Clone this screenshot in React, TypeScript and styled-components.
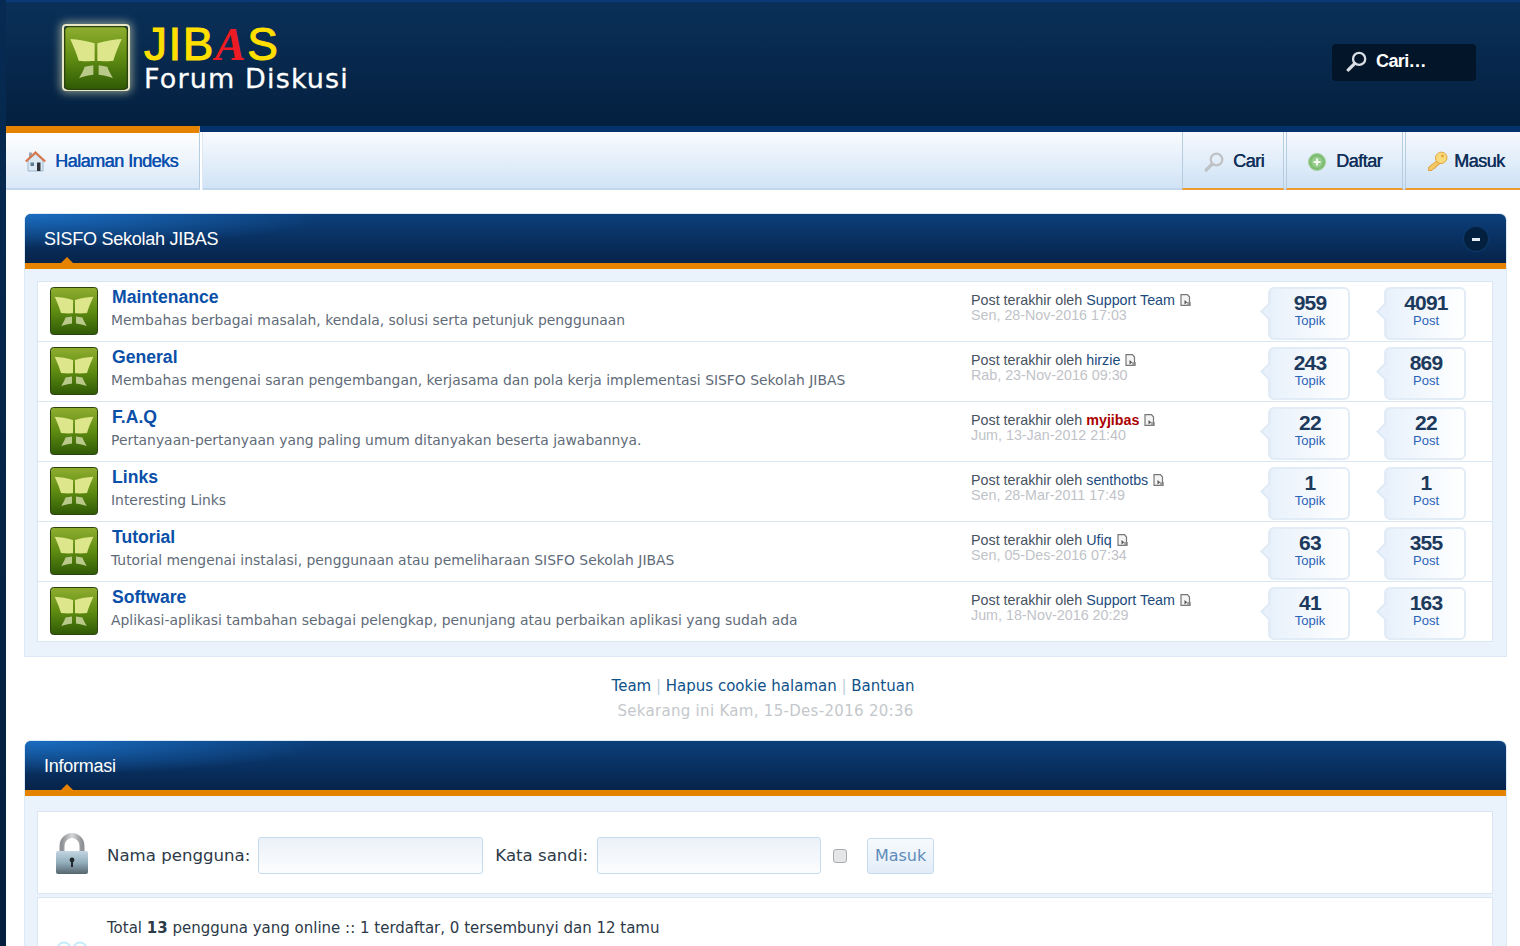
import React from "react";
import styled, { createGlobalStyle } from "styled-components";

const GlobalStyle = createGlobalStyle`
  html, body {
    margin: 0;
    padding: 0;
    height: 946px;
    overflow: hidden;
    background: #fff;
  }
  body {
    font-family: "DejaVu Sans", sans-serif;
  }
  * { box-sizing: border-box; }
`;

const forums = [
  { title: "Maintenance", desc: "Membahas berbagai masalah, kendala, solusi serta petunjuk penggunaan", by: "Support Team", date: "Sen, 28-Nov-2016 17:03", topics: 959, posts: 4091 },
  { title: "General", desc: "Membahas mengenai saran pengembangan, kerjasama dan pola kerja implementasi SISFO Sekolah JIBAS", by: "hirzie", date: "Rab, 23-Nov-2016 09:30", topics: 243, posts: 869 },
  { title: "F.A.Q", desc: "Pertanyaan-pertanyaan yang paling umum ditanyakan beserta jawabannya.", by: "myjibas", admin: true, date: "Jum, 13-Jan-2012 21:40", topics: 22, posts: 22 },
  { title: "Links", desc: "Interesting Links", by: "senthotbs", date: "Sen, 28-Mar-2011 17:49", topics: 1, posts: 1 },
  { title: "Tutorial", desc: "Tutorial mengenai instalasi, penggunaan atau pemeliharaan SISFO Sekolah JIBAS", by: "Ufiq", date: "Sen, 05-Des-2016 07:34", topics: 63, posts: 355 },
  { title: "Software", desc: "Aplikasi-aplikasi tambahan sebagai pelengkap, penunjang atau perbaikan aplikasi yang sudah ada", by: "Support Team", date: "Jum, 18-Nov-2016 20:29", topics: 41, posts: 163 },
];

function ButterflyIcon({ size, id }: { size: number; id: string }) {
  return (
    <svg width={size} height={size} viewBox="0 0 48 48">
      <defs>
        <linearGradient id={id} x1="0" y1="0" x2="0" y2="1">
          <stop offset="0" stopColor="#8fae30" />
          <stop offset="0.5" stopColor="#5f8c12" />
          <stop offset="1" stopColor="#2f5a05" />
        </linearGradient>
      </defs>
      <rect x="0.5" y="0.5" width="47" height="47" rx="3" fill={`url(#${id})`} stroke="#2c4310" />
      <path d="M4.7 9.7 C11 10 17 11.3 23 13 L23 26.3 C19 26.5 15 26.5 11 26 C9.5 20.5 7 15 4.7 9.7 Z" fill="#dde68a" />
      <path d="M43.3 9.7 C37 10 31 11.3 25 13 L25 26.3 C29 26.5 33 26.5 37 26 C38.5 20.5 41 15 43.3 9.7 Z" fill="#dde68a" />
      <path d="M22 29.5 L22 36.5 C18 37 14.5 37.8 11.3 39 C13 36 14.5 33.5 15.5 30.5 Z" fill="#b9c98a" />
      <path d="M26 29.5 L26 36.5 C30 37 33.5 37.8 36.7 39 C35 36 33.5 33.5 32.5 30.5 Z" fill="#b9c98a" />
    </svg>
  );
}

function SearchIcon({ size, color }: { size: number; color: string }) {
  return (
    <svg width={size} height={size} viewBox="0 0 20 20" fill="none">
      <circle cx="12.5" cy="7.5" r="5.8" stroke={color} strokeWidth="2.2" />
      <path d="M8.2 12 L2.2 18" stroke={color} strokeWidth="3.2" strokeLinecap="round" />
    </svg>
  );
}

function HouseIcon() {
  return (
    <svg width="21" height="21" viewBox="0 0 21 21">
      <rect x="4" y="1.5" width="3" height="5" fill="#9aa7b2" />
      <path d="M3 9.5 L10.5 3 L18 9.5 V20 H3 Z" fill="#dbe8f4" stroke="#8ea9c2" strokeWidth="0.8" />
      <path d="M0.8 10.5 L10.5 1.5 L20.2 10.5" fill="none" stroke="#d9774a" strokeWidth="2.2" />
      <rect x="5.5" y="11.5" width="3.5" height="3.5" fill="#5d7a93" />
      <rect x="12" y="11.5" width="3.5" height="8.5" fill="#2d3338" />
    </svg>
  );
}

function PlusIcon() {
  return (
    <svg width="18" height="18" viewBox="0 0 18 18">
      <circle cx="9" cy="9" r="8.5" fill="#7dbd72" stroke="#a3d09b" />
      <circle cx="9" cy="9" r="5.5" fill="#97cd8c" />
      <path d="M9 5.5 V12.5 M5.5 9 H12.5" stroke="#f2faef" strokeWidth="2.2" />
    </svg>
  );
}

function KeyIcon() {
  return (
    <svg width="21" height="21" viewBox="0 0 21 21">
      <path d="M9 10.5 L1.8 16 L1.5 19.5 L5 19.5 L6.5 17.5 L8.5 17 L9 15 L11 14.5 L13 12.5 Z" fill="#f4c964" stroke="#e09a35" strokeWidth="0.9" />
      <path d="M8.5 7 C8.5 3.5 11.5 1.2 14.5 1.2 C17.5 1.2 20 3.5 20 6.5 C20 10 17 12.5 14 12.5 C11 12.5 8.5 10.5 8.5 7 Z" fill="#f9da7a" stroke="#e09a35" strokeWidth="0.9" />
      <ellipse cx="15.5" cy="5" rx="1.6" ry="1.2" fill="#e3a63f" />
    </svg>
  );
}

function PostIcon() {
  return (
    <svg width="11" height="12" viewBox="0 0 11 12" fill="none">
      <path d="M1 0.7 H7.5 L9.5 3 V11.3 H1 Z" fill="#f4f4f4" stroke="#777" strokeWidth="1.2" />
      <path d="M4.5 6 L7.2 8.3 L4.5 10.6 Z" fill="#555" />
      <path d="M7 8 H11 V12 H7 Z" fill="#888" opacity="0.7" />
    </svg>
  );
}

function LockIcon() {
  return (
    <svg width="34" height="42" viewBox="0 0 34 42">
      <defs>
        <linearGradient id="lockBody" x1="0" y1="0" x2="0" y2="1">
          <stop offset="0" stopColor="#c3d6e2" />
          <stop offset="0.5" stopColor="#93aebd" />
          <stop offset="1" stopColor="#56666f" />
        </linearGradient>
        <linearGradient id="lockArc" x1="0" y1="0" x2="1" y2="0">
          <stop offset="0" stopColor="#8e9296" />
          <stop offset="0.5" stopColor="#d6d8da" />
          <stop offset="1" stopColor="#8e9296" />
        </linearGradient>
      </defs>
      <path d="M7 20 V13 A10 10.5 0 0 1 27 13 V20" fill="none" stroke="url(#lockArc)" strokeWidth="5" />
      <rect x="1" y="18" width="32" height="23" rx="2" fill="url(#lockBody)" />
      <circle cx="17" cy="27" r="2.4" fill="#22282c" />
      <rect x="16" y="27" width="2" height="7" fill="#22282c" />
    </svg>
  );
}

function OnlineIcon() {
  return (
    <svg width="34" height="8" viewBox="0 0 34 8" fill="none">
      <circle cx="9" cy="8" r="6.5" stroke="#c3ecfa" strokeWidth="2" />
      <circle cx="25" cy="8" r="6.5" stroke="#c3ecfa" strokeWidth="2" />
    </svg>
  );
}

const Page = styled.div`
  height: 946px;
  overflow: hidden;
  padding-left: 6px;
  background: linear-gradient(180deg, #062a52 0%, #041f3d 100%);
`;

const Sheet = styled.div`
  background: #fff;
  min-height: 946px;
`;

const Masthead = styled.header`
  height: 132px;
  border-top: 2px solid #0b3a78;
  background: linear-gradient(180deg, #0a3059 0%, #04203f 100%);
  border-bottom: 6px solid #03326c;
  display: flex;
  align-items: flex-start;
  justify-content: space-between;
  padding: 22px 44px 0 56px;
`;

const Brand = styled.div`
  display: flex;
  gap: 14px;
`;

const BrandIcon = styled.div`
  width: 68px;
  height: 67px;
  border-radius: 4px;
  border: 2px solid #e8e8c4;
  box-shadow: 0 0 8px 2px rgba(236, 238, 190, 0.55);
  display: flex;
  svg { display: block; }
`;

const BrandText = styled.div`
  display: flex;
  flex-direction: column;
  margin-top: -1px;
`;

const BrandName = styled.div`
  font-family: "Liberation Sans", Arial, sans-serif;
  font-size: 46px;
  line-height: 42px;
  letter-spacing: 1.5px;
  color: #ffdf00;
  -webkit-text-stroke: 1px #ffdf00;
  em {
    font-family: "Liberation Serif", serif;
    font-style: italic;
    font-weight: 700;
    color: #ed1c24;
    -webkit-text-stroke: 0;
  }
`;

const BrandSub = styled.div`
  font-family: "DejaVu Sans", sans-serif;
  font-size: 27px;
  line-height: 28px;
  margin-top: -1px;
  letter-spacing: 1.15px;
  color: #fff;
  -webkit-text-stroke: 0.3px #fff;
`;

const SearchBox = styled.div`
  width: 144px;
  height: 37px;
  margin-top: 20px;
  padding: 0 0 2px 14px;
  background: #031528;
  border-radius: 4px;
  display: flex;
  align-items: center;
  gap: 9px;
  font-family: "Liberation Sans", Arial, sans-serif;
  font-size: 18px;
  font-weight: 700;
  letter-spacing: -0.6px;
  color: #fff;
`;

const Nav = styled.nav`
  height: 58px;
  display: flex;
  align-items: stretch;
  justify-content: space-between;
`;

const NavFill = styled.div`
  flex: 1;
  display: flex;
  justify-content: flex-end;
  margin-left: 2px;
  height: 58px;
  background: linear-gradient(180deg, #f9fbfe 0%, #cfe2f6 100%);
  box-shadow: inset 0 -2px 0 #c3d7ea;
  border-left: 1px solid #dce8f3;
`;

const NavTab = styled.a<{ $active?: boolean; $width: number; $gap: number }>`
  width: ${(p) => p.$width}px;
  display: flex;
  align-items: center;
  gap: ${(p) => p.$gap}px;
  padding-left: ${(p) => (p.$active ? 19 : 21)}px;
  padding-top: ${(p) => (p.$active ? 1 : 3)}px;
  font-family: "Liberation Sans", Arial, sans-serif;
  font-size: 18px;
  letter-spacing: -0.5px;
  font-weight: 400;
  text-shadow: 0.5px 0 0 currentColor;
  color: ${(p) => (p.$active ? "#0a4fae" : "#10305a")};
  background: ${(p) =>
    p.$active
      ? "linear-gradient(180deg, #ffffff 0%, #d9e8f8 100%)"
      : "linear-gradient(180deg, #f5f9fd 0%, #cfe2f6 100%)"};
  border-left: ${(p) => (p.$active ? "none" : "1px solid #b6cde0")};
  border-right: 1px solid #b6cde0;
  margin-left: ${(p) => (p.$active ? 0 : 2)}px;
  ${(p) =>
    p.$active
      ? `
    margin-top: -6px;
    height: 64px;
    border-top: 7px solid #e58200;
    border-bottom: 2px solid #c3d7ea;
  `
      : `
    height: 58px;
    border-bottom: 2px solid #ed9a2e;
    &:last-child { border-right: none; }
  `}
`;

const Content = styled.main`
  padding: 24px 14px 0 19px;
`;

const Block = styled.section`
  background: #eaf2fb;
  border-radius: 6px 6px 0 0;
  box-shadow: 0 0 0 1px #dce9f6;
  padding-bottom: 14px;
`;

const BlockHead = styled.div`
  position: relative;
  height: 55px;
  border-radius: 6px 6px 0 0;
  border-bottom: 6px solid #e58200;
  background: radial-gradient(ellipse 300px 34px at 0 0, #1a6cc0 0%, rgba(26, 108, 192, 0) 100%),
    linear-gradient(180deg, #0c3f7a 0%, #06234a 100%);
  display: flex;
  align-items: center;
  justify-content: space-between;
  padding: 1px 18px 0 19px;
  font-family: "Liberation Sans", Arial, sans-serif;
  font-size: 18px;
  color: #fff;
  letter-spacing: -0.25px;

  &::after {
    content: "";
    position: absolute;
    left: 36px;
    bottom: 0;
    border-left: 6px solid transparent;
    border-right: 6px solid transparent;
    border-bottom: 6px solid #e58200;
  }
`;

const Collapse = styled.span`
  width: 24px;
  height: 24px;
  border-radius: 50%;
  background: #04203f;
  box-shadow: 0 0 0 1px #0c3a6e;
  display: flex;
  align-items: center;
  justify-content: center;

  &::before {
    content: "";
    width: 8px;
    height: 3px;
    background: #e6edf5;
  }
`;

const RowList = styled.div`
  margin: 12px 13px 0 12px;
  background: #fff;
  border: 1px solid #d9e6f4;
`;

const Row = styled.div`
  height: 60px;
  display: grid;
  grid-template-columns: 921px 297px 116px 1fr;
  padding-left: 12px;
  border-bottom: 1px solid #d9e6f4;
  &:last-child { border-bottom: none; height: 59px; }
`;

const RowMain = styled.div`
  display: flex;
  align-items: flex-start;
  gap: 13px;
  padding-top: 5px;
  svg { display: block; flex: none; }
`;

const RowText = styled.div`
  display: flex;
  flex-direction: column;
`;

const ForumTitle = styled.a`
  margin-left: 1px;
  font-family: "Liberation Sans", Arial, sans-serif;
  font-size: 17.6px;
  line-height: 20px;
  font-weight: 700;
  color: #0a4fa8;
`;

const ForumDesc = styled.div`
  font-size: 13.9px;
  line-height: 18px;
  margin-top: 4px;
  color: #5f6b78;
`;

const LastPost = styled.div`
  padding-top: 11px;
  font-family: "Liberation Sans", Arial, sans-serif;
  font-size: 14.3px;
  line-height: 15px;
  color: #46525f;
`;

const Author = styled.a<{ $admin?: boolean }>`
  color: ${(p) => (p.$admin ? "#aa0000" : "#1c4a7c")};
  font-weight: ${(p) => (p.$admin ? 700 : 400)};
`;

const PostMark = styled.span`
  margin-left: 5px;
  svg { vertical-align: -1px; }
`;

const LastDate = styled.div`
  color: #bfc3c8;
`;

const Stat = styled.div`
  position: relative;
  width: 82px;
  height: 53px;
  margin-top: 5px;
  border: 2px solid #e2ecf7;
  border-left-width: 3px;
  border-radius: 6px;
  background: linear-gradient(90deg, #e8f1fb 0%, #ffffff 100%);
  display: flex;
  flex-direction: column;
  align-items: center;
  padding-left: 1px;
  font-family: "Liberation Sans", Arial, sans-serif;

  &::before {
    content: "";
    position: absolute;
    left: -8px;
    top: 15px;
    width: 13px;
    height: 13px;
    transform: rotate(45deg);
    background: #e8f1fb;
    border-left: 2px solid #dfe9f5;
    border-bottom: 2px solid #dfe9f5;
    clip-path: polygon(0 0, 0 100%, 100% 100%);
  }
`;

const StatCount = styled.b`
  font-size: 21px;
  line-height: 22px;
  margin-top: 3px;
  letter-spacing: -0.8px;
  color: #1d3a5c;
`;

const StatLabel = styled.span`
  font-size: 13px;
  line-height: 14px;
  color: #2a62b8;
`;

const FootLinks = styled.div`
  margin-top: 18px;
  padding-right: 5px;
  text-align: center;
  font-size: 15px;
  line-height: 25px;
  color: #105289;
  span { color: #bcd0e2; }
`;

const FootTime = styled.div`
  text-align: center;
  font-size: 15px;
  line-height: 25px;
  letter-spacing: 0.3px;
  color: #c4c8cc;
  margin-bottom: 17px;
`;

const LoginBox = styled.div`
  margin: 15px 13px 0 12px;
  height: 83px;
  background: #fff;
  border: 1px solid #d9e6f4;
  display: flex;
  align-items: center;
  padding: 6px 0 0 17px;
  font-size: 16.6px;
  color: #2d3a48;
  svg { flex: none; margin-right: 18px; margin-top: -3px; }
`;

const LoginField = styled.input<{ $width: number; $lead: number }>`
  width: ${(p) => p.$width}px;
  height: 37px;
  margin: 0 12px 0 ${(p) => p.$lead}px;
  border: 1px solid #c6daee;
  border-radius: 3px;
  background: linear-gradient(180deg, #ebf1f8 0%, #fcfdfe 100%);
`;

const Remember = styled.span`
  width: 14px;
  height: 14px;
  border: 1px solid #a9a9a9;
  border-radius: 3px;
  background: #e4e6e8;
`;

const LoginButton = styled.button`
  width: 67px;
  height: 36px;
  margin-left: 20px;
  padding: 0;
  border: 1px solid #c6daee;
  border-radius: 3px;
  background: linear-gradient(180deg, #f7fafd 0%, #e2edf8 100%);
  font-family: "DejaVu Sans", sans-serif;
  font-size: 16px;
  color: #5f8cba;
`;

const OnlineBox = styled.div`
  margin: 3px 13px 0 12px;
  height: 120px;
  background: #fff;
  border: 1px solid #d9e6f4;
  display: flex;
  gap: 18px;
  padding: 19px 0 0 17px;
  font-size: 15px;
  line-height: 22px;
  color: #2d3a48;
`;

const OnlineMark = styled.div`
  padding-top: 24px;
  svg { display: block; }
`;

export default function App() {
  return (
    <>
      <GlobalStyle />
      <Page>
        <Sheet>
          <Masthead>
            <Brand>
              <BrandIcon>
                <ButterflyIcon size={64} id="brandIcon" />
              </BrandIcon>
              <BrandText>
                <BrandName>JIB<em>A</em>S</BrandName>
                <BrandSub>Forum Diskusi</BrandSub>
              </BrandText>
            </Brand>
            <SearchBox>
              <SearchIcon size={21} color="#d8dee4" />
              Cari…
            </SearchBox>
          </Masthead>
          <Nav>
            <NavTab $active $width={194} $gap={9}>
              <HouseIcon />
              Halaman Indeks
            </NavTab>
            <NavFill>
              <NavTab $width={102} $gap={9}>
                <SearchIcon size={20} color="#bfc2c4" />
                Cari
              </NavTab>
              <NavTab $width={117} $gap={10}>
                <PlusIcon />
                Daftar
              </NavTab>
              <NavTab $width={115} $gap={6}>
                <KeyIcon />
                Masuk
              </NavTab>
            </NavFill>
          </Nav>
          <Content>
            <Block>
              <BlockHead>
                SISFO Sekolah JIBAS
                <Collapse />
              </BlockHead>
              <RowList>
                {forums.map((f, i) => (
                  <Row key={f.title}>
                    <RowMain>
                      <ButterflyIcon size={48} id={`forum${i}`} />
                      <RowText>
                        <ForumTitle>{f.title}</ForumTitle>
                        <ForumDesc>{f.desc}</ForumDesc>
                      </RowText>
                    </RowMain>
                    <LastPost>
                      Post terakhir oleh <Author $admin={f.admin}>{f.by}</Author>
                      <PostMark><PostIcon /></PostMark>
                      <LastDate>{f.date}</LastDate>
                    </LastPost>
                    <Stat>
                      <StatCount>{f.topics}</StatCount>
                      <StatLabel>Topik</StatLabel>
                    </Stat>
                    <Stat>
                      <StatCount>{f.posts}</StatCount>
                      <StatLabel>Post</StatLabel>
                    </Stat>
                  </Row>
                ))}
              </RowList>
            </Block>
            <FootLinks>
              Team <span>|</span> Hapus cookie halaman <span>|</span> Bantuan
            </FootLinks>
            <FootTime>Sekarang ini Kam, 15-Des-2016 20:36</FootTime>
            <Block>
              <BlockHead>Informasi</BlockHead>
              <LoginBox>
                <LockIcon />
                Nama pengguna:
                <LoginField $width={225} $lead={8} />
                Kata sandi:
                <LoginField $width={224} $lead={9} />
                <Remember />
                <LoginButton>Masuk</LoginButton>
              </LoginBox>
              <OnlineBox>
                <OnlineMark><OnlineIcon /></OnlineMark>
                <div>Total <b>13</b> pengguna yang online :: 1 terdaftar, 0 tersembunyi dan 12 tamu</div>
              </OnlineBox>
            </Block>
          </Content>
        </Sheet>
      </Page>
    </>
  );
}
